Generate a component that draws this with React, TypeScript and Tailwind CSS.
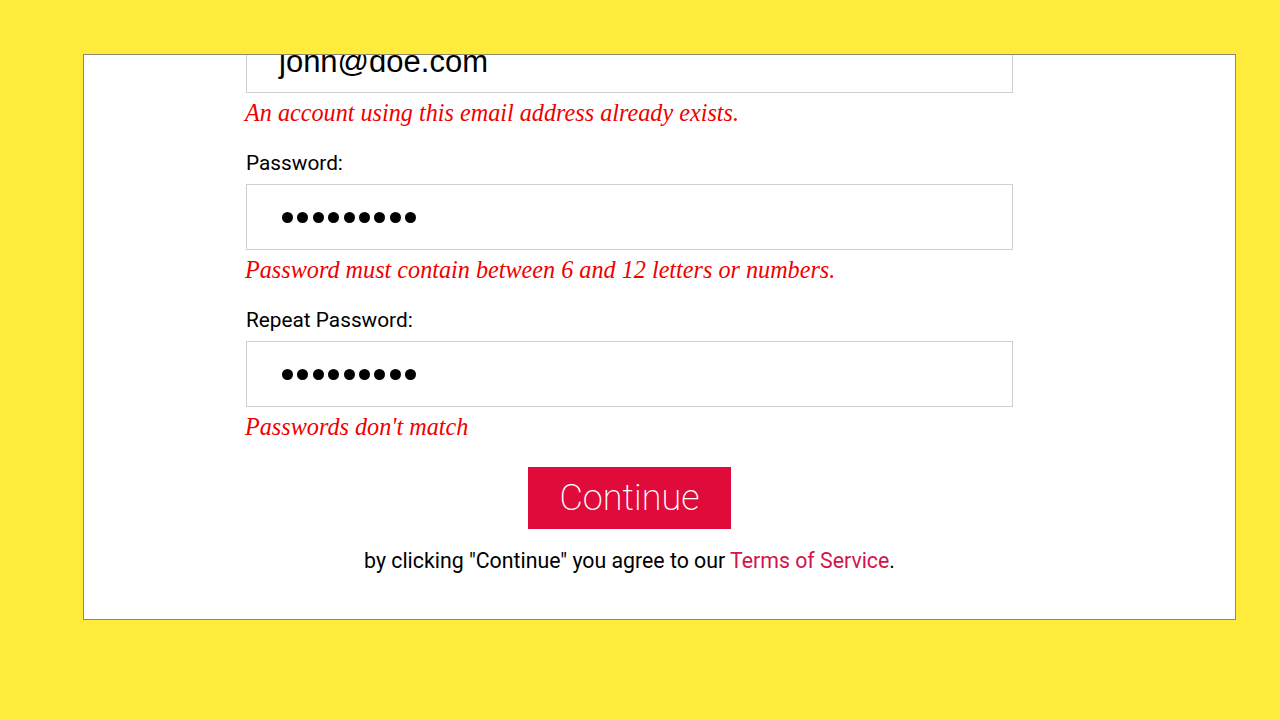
import React from "react";

const Dots = () => (
  <div className="flex items-center gap-[4.4px]">
    {Array.from({ length: 9 }).map((_, i) => (
      <span key={i} className="block w-[11px] h-[11px] rounded-full bg-black" />
    ))}
  </div>
);

const Err = ({ children }: { children: React.ReactNode }) => (
  <div className="h-[40px] leading-[40px] text-[24.2px] italic text-[#f00000] whitespace-nowrap -ml-[1px]" style={{ fontFamily: '"Liberation Serif", serif' }}>
    {children}
  </div>
);

const Label = ({ children }: { children: React.ReactNode }) => (
  <div className="mt-[18px] h-[24px] leading-[24px] text-[20.8px] text-black" style={{ fontFamily: 'Roboto, sans-serif' }}>
    {children}
  </div>
);

export default function App() {
  return (
    <div className="w-[1280px] h-[720px] bg-[#ffeb3b] pt-[54px] pl-[83px]">
      <div className="w-[1153px] h-[566px] bg-white border border-[#8f8a6a] overflow-hidden pl-[162px]">
        <div className="w-[767px] -mt-[28px] flex flex-col">
          <div className="h-[66px] border border-[#cfcfcf] flex items-center pl-[32px] text-[31px] text-black" style={{ fontFamily: '"Liberation Sans", Arial, sans-serif' }}>
            <span className="mt-[4px]">john@doe.com</span>
          </div>
          <Err>An account using this email address already exists.</Err>
          <Label>Password:</Label>
          <div className="mt-[9px] h-[66px] border border-[#cfcfcf] flex items-center pl-[35px]">
            <Dots />
          </div>
          <Err>Password must contain between 6 and 12 letters or numbers.</Err>
          <Label>Repeat Password:</Label>
          <div className="mt-[9px] h-[66px] border border-[#cfcfcf] flex items-center pl-[35px]">
            <Dots />
          </div>
          <Err>Passwords don't match</Err>
          <div className="mt-[20px] flex justify-center">
            <button className="w-[203px] h-[62px] bg-[#e00b3b] text-white text-[36px] font-extralight flex items-center justify-center" style={{ fontFamily: 'Roboto, sans-serif' }}>
              Continue
            </button>
          </div>
          <div className="mt-[20px] h-[24px] leading-[24px] text-center text-[21.3px] text-black" style={{ fontFamily: 'Roboto, sans-serif' }}>
            by clicking "Continue" you agree to our <span className="text-[#d2144a]">Terms of Service</span>.
          </div>
        </div>
      </div>
    </div>
  );
}
